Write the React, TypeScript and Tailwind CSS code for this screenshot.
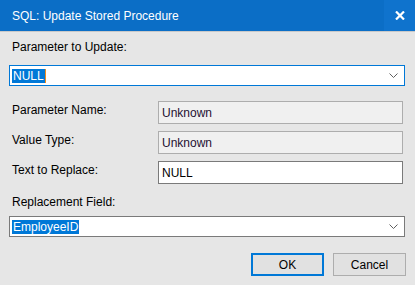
import React from "react";

const font = { fontFamily: '"Segoe UI", "Liberation Sans", Arial, sans-serif' };

function Chevron() {
  return (
    <svg width="9" height="5" viewBox="0 0 9 5" className="shrink-0" aria-hidden>
      <path d="M0.5 0.5 L4.5 4.5 L8.5 0.5" fill="none" stroke="#606060" strokeWidth="1" />
    </svg>
  );
}

function Combo({ value, focused }: { value: string; focused?: boolean }) {
  return (
    <div
      className={`flex h-[21px] items-center justify-between bg-white pl-[2px] pr-[6px] ${
        focused ? "border border-[#0078d7]" : "border border-[#7a7a7a]"
      }`}
    >
      <span className="flex items-center">
        <span className="bg-[#0078d7] px-[1px] leading-[14px] text-white">{value}</span>
        {focused && <span className="h-[14px] w-[1px] bg-[#f08c1e]" />}
      </span>
      <Chevron />
    </div>
  );
}

function FieldRow({ label, value, readOnly }: { label: string; value: string; readOnly?: boolean }) {
  return (
    <div className="flex h-[23px] items-start">
      <span className="w-[146px] pt-[1px] leading-[16px]">{label}</span>
      <div
        className={`flex h-[23px] w-[245px] items-center border px-[3px] ${
          readOnly ? "border-[#adadad] bg-[#f0f0f0] text-[#1e1030]" : "border-[#7a7a7a] bg-white"
        }`}
      >
        {value}
      </div>
    </div>
  );
}

export default function App() {
  return (
    <div className="h-[285px] w-[415px] overflow-hidden bg-[#e6e6e6] text-[12px] text-black" style={font}>
      <div className="flex h-[32px] items-center justify-between border-b border-[#c9c9c9] bg-[#0b6ec6]">
        <span className="pl-[12px] text-white">SQL: Update Stored Procedure</span>
        <div className="flex h-full w-[31px] items-center justify-center bg-[#0f73cd]">
          <svg width="10" height="9" viewBox="0 0 10 9" aria-hidden>
            <path d="M1 0.5 L9 8.5 M9 0.5 L1 8.5" stroke="white" strokeWidth="2.2" />
          </svg>
        </div>
      </div>

      <div className="flex flex-col pl-[9px] pr-[10px]">
        <span className="mt-[7px] pl-[3px] leading-[16px]">Parameter to Update:</span>
        <div className="mt-[10px]">
          <Combo value="NULL" focused />
        </div>

        <div className="mt-[15px] flex flex-col gap-[7px] pl-[3px]">
          <FieldRow label="Parameter Name:" value="Unknown" readOnly />
          <FieldRow label="Value Type:" value="Unknown" readOnly />
          <FieldRow label="Text to Replace:" value="NULL" />
        </div>

        <span className="mt-[10px] pl-[3px] leading-[16px]">Replacement Field:</span>
        <div className="mt-[6px]">
          <Combo value="EmployeeID" />
        </div>

        <div className="-mr-[1px] mt-[16px] flex justify-end gap-[9px]">
          <button className="h-[23px] w-[73px] border-2 border-[#0078d7] bg-[#e1e1e1]">OK</button>
          <button className="h-[23px] w-[73px] border border-[#adadad] bg-[#e1e1e1]">Cancel</button>
        </div>
      </div>
    </div>
  );
}
